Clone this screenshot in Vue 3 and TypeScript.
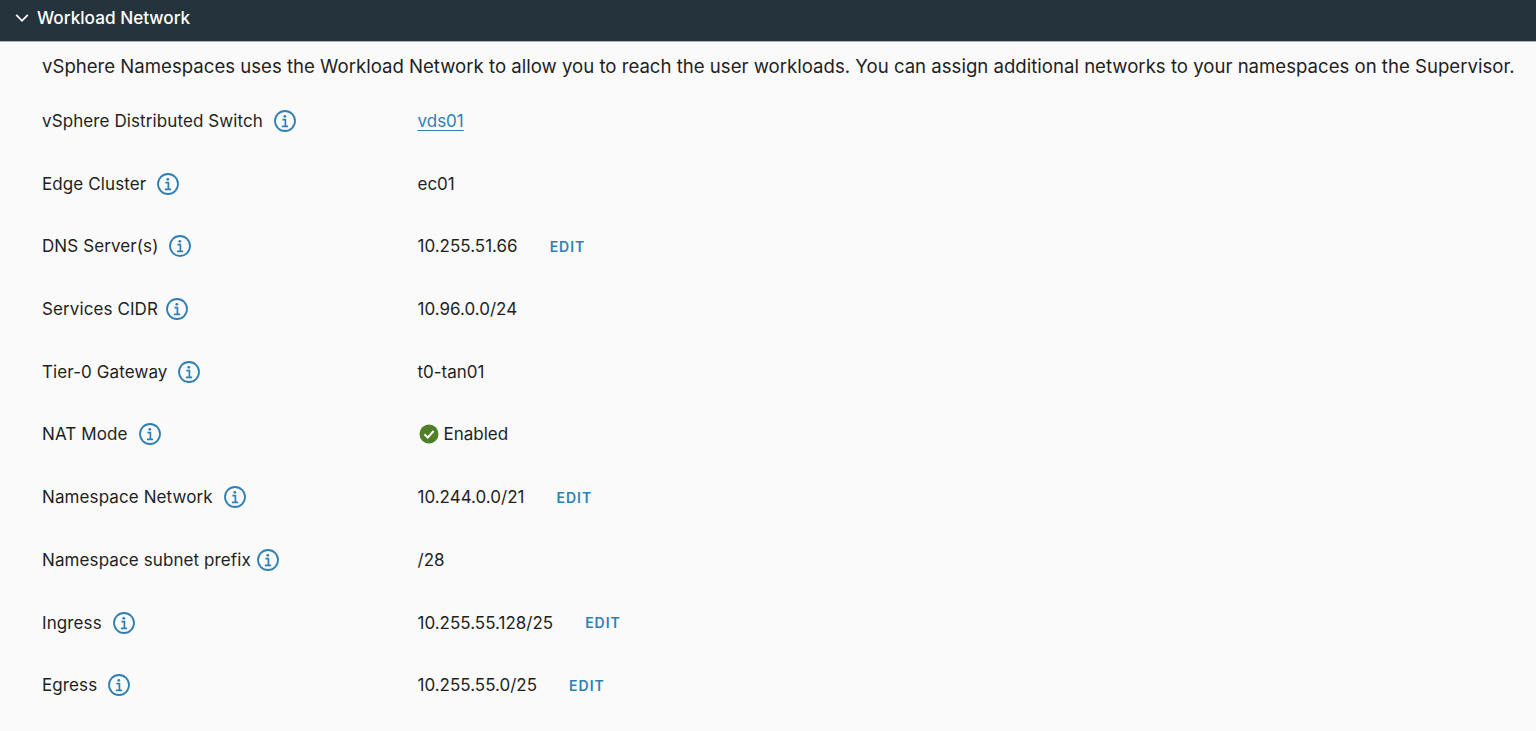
<script setup lang="ts">
interface Row { label: string; value: string; link?: boolean; ok?: boolean; edit?: boolean; gap?: number }
const rows: Row[] = [
  { label: 'vSphere Distributed Switch', value: 'vds01', link: true },
  { label: 'Edge Cluster', value: 'ec01' },
  { label: 'DNS Server(s)', value: '10.255.51.66', edit: true },
  { label: 'Services CIDR', value: '10.96.0.0/24', gap: 7 },
  { label: 'Tier-0 Gateway', value: 't0-tan01' },
  { label: 'NAT Mode', value: 'Enabled', ok: true },
  { label: 'Namespace Network', value: '10.244.0.0/21', edit: true },
  { label: 'Namespace subnet prefix', value: '/28', gap: 5 },
  { label: 'Ingress', value: '10.255.55.128/25', edit: true },
  { label: 'Egress', value: '10.255.55.0/25', edit: true },
]
</script>

<template>
  <div class="page">
    <header class="bar">
      <svg class="chev" viewBox="0 0 14 10" width="14" height="10"><path d="M1.2 1.8 7 7.8l5.8-6" fill="none" stroke="#fff" stroke-width="1.8" /></svg>
      <span class="title">Workload Network</span>
    </header>
    <p class="intro">vSphere Namespaces uses the Workload Network to allow you to reach the user workloads. You can assign additional networks to your namespaces on the Supervisor.</p>
    <div class="rows">
      <div v-for="r in rows" :key="r.label" class="row">
        <div class="label" :style="r.gap ? { gap: r.gap + 'px' } : undefined">
          <span>{{ r.label }}</span>
          <svg class="info" viewBox="0 0 24 24" width="24" height="24">
            <circle cx="12" cy="12" r="10" fill="none" stroke="#2f7fb5" stroke-width="1.8" />
            <circle cx="11.8" cy="7.3" r="1.4" fill="#2f7fb5" />
            <path d="M9.4 10.6h3v6.6M8.9 17.4h6.2" fill="none" stroke="#2f7fb5" stroke-width="1.7" />
          </svg>
        </div>
        <div class="value">
          <a v-if="r.link" class="link">{{ r.value }}</a>
          <template v-else-if="r.ok">
            <svg class="ok" viewBox="0 0 20 20" width="20" height="20">
              <circle cx="10" cy="10" r="9.5" fill="#4f7f27" />
              <path d="M5.4 10.3 8.8 13.6 14.6 7" fill="none" stroke="#fff" stroke-width="2" />
            </svg>
            <span>{{ r.value }}</span>
          </template>
          <span v-else>{{ r.value }}</span>
          <a v-if="r.edit" class="edit">EDIT</a>
        </div>
      </div>
    </div>
  </div>
</template>

<style scoped>
.page {
  width: 1536px;
  height: 731px;
  overflow: hidden;
  background: #fafafa;
  color: #1f1f1f;
  font-family: Inter, "Noto Sans", sans-serif;
  font-size: 17px;
}
.bar {
  height: 42px;
  box-sizing: border-box;
  background: #25333d;
  border-bottom: 1px solid #9fb4bd;
  display: flex;
  align-items: center;
  padding-left: 15px;
  gap: 8px;
  color: #fff;
}
.title { font-weight: 500; font-size: 17.2px; position: relative; top: -3px; }
.chev { position: relative; top: -3px; }
.intro {
  margin: 0;
  padding: 12px 0 0 42px;
  line-height: 24px;
  white-space: nowrap;
  font-size: 18.6px;
}
.rows { margin-top: 11.5px; }
.row {
  height: 62.72px;
  display: flex;
  align-items: center;
}
.label {
  width: 417.5px;
  padding-left: 42px;
  box-sizing: border-box;
  display: flex;
  align-items: center;
  gap: 10px;
  letter-spacing: 0.1px;
}
.value { display: flex; align-items: center; }
.link { color: #2f7fb5; text-decoration: underline; text-underline-offset: 3px; }
.ok { margin-right: 5px; margin-left: 1px; }
.edit {
  margin-left: 32px;
  color: #2f7fb5;
  font-size: 14px;
  font-weight: 600;
  letter-spacing: 1px;
}
</style>
